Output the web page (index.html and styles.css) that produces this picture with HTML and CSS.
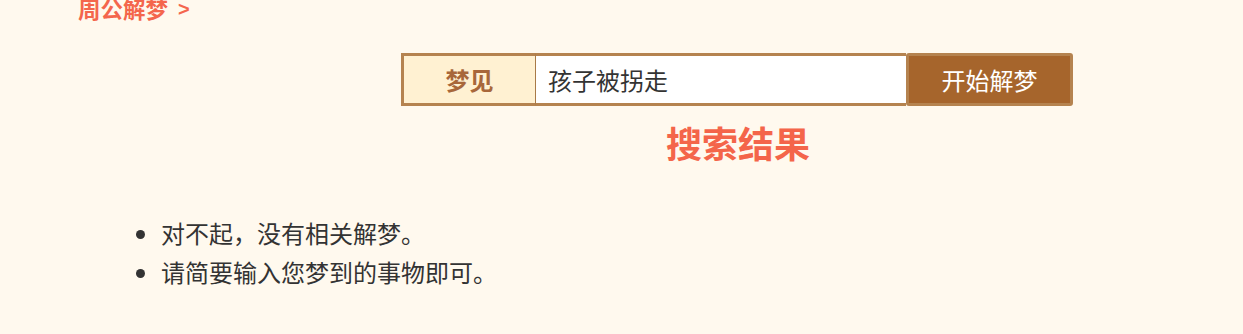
FILE: index.html
```html
<!DOCTYPE html>
<html lang="zh">
<head>
<meta charset="utf-8">
<link rel="stylesheet" href="styles.css">
</head>
<body>
<div class="crumb"><span class="crumb-link">周公解梦</span><span class="crumb-sep">&gt;</span></div>
<form class="search">
  <div class="search-label">梦见</div>
  <div class="search-input">孩子被拐走</div>
  <div class="search-btn">开始解梦</div>
</form>
<h2 class="result-title">搜索结果</h2>
<ul class="result-list">
  <li>对不起，没有相关解梦。</li>
  <li>请简要输入您梦到的事物即可。</li>
</ul>
</body>
</html>
```
FILE: styles.css
```css
html, body {
  margin: 0;
  padding: 0;
  background: #fff9ee;
  font-family: "Noto Sans CJK SC", "Noto Sans", sans-serif;
  color: #333;
}
.crumb {
  margin-top: -7px;
  padding-left: 78px;
  height: 30px;
  display: flex;
  align-items: center;
  gap: 10px;
  color: #f4664d;
  font-size: 22.5px;
  font-weight: bold;
}
.crumb-sep {
  font-family: "Liberation Sans", sans-serif;
  font-size: 20px;
  padding-top: 2px;
}
.search {
  margin: 30px 0 0 401px;
  display: flex;
  height: 53px;
  width: 672px;
}
.search-label {
  box-sizing: border-box;
  width: 135px;
  border: 3px solid #b5834f;
  border-right: 1px solid #a87a48;
  background: #fff1d2;
  color: #a8673a;
  font-weight: bold;
  font-size: 24px;
  display: flex;
  align-items: center;
  justify-content: center;
}
.search-input {
  box-sizing: border-box;
  width: 370px;
  border-top: 3px solid #b5834f;
  border-bottom: 3px solid #b5834f;
  background: #fff;
  font-size: 24px;
  color: #333;
  display: flex;
  align-items: center;
  padding-left: 12px;
}
.search-btn {
  box-sizing: border-box;
  width: 167px;
  border: 3px solid #b5834f;
  border-radius: 3px;
  background: #a6652c;
  color: #fff;
  font-size: 24px;
  display: flex;
  align-items: center;
  justify-content: center;
}
.result-title {
  margin: 12px 0 0;
  text-align: center;
  padding-left: 233px;
  font-size: 36px;
  line-height: 48px;
  font-weight: bold;
  color: #f4654a;
}
.result-list {
  margin: 47px 0 0;
  padding-left: 161px;
  font-size: 24px;
  line-height: 39px;
  color: #333;
}
```
